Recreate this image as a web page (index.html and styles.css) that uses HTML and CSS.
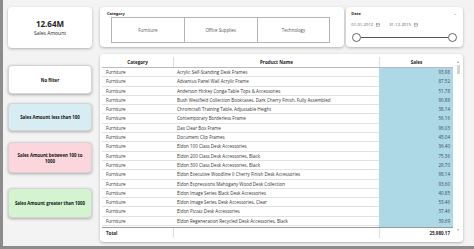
FILE: index.html
```html
<!DOCTYPE html>
<html lang="en">
<head>
    <meta charset="UTF-8">
    <title>Sales Dashboard</title>
    <link rel="stylesheet" href="styles.css">
</head>
<body>
    <div class="canvas">
        <div class="left-col">
            <div class="card kpi-card">
                <div class="kpi-value">12.64M</div>
                <div class="kpi-label">Sales Amount</div>
            </div>
            <div class="filter-button btn-none">No filter</div>
            <div class="filter-button btn-low">Sales Amount less than 100</div>
            <div class="filter-button btn-mid">Sales Amount between 100 to 1000</div>
            <div class="filter-button btn-high">Sales Amount greater than 1000</div>
        </div>

        <div class="main-col">
            <div class="top-row">
                <div class="card slicer-card">
                    <div class="slicer-title">Category</div>
                    <div class="tiles">
                        <div class="tile">Furniture</div>
                        <div class="tile">Office Supplies</div>
                        <div class="tile">Technology</div>
                    </div>
                </div>
                <div class="card date-card">
                    <div class="date-head">
                        <span class="slicer-title">Date</span>
                        <span class="chevron">&#8964;</span>
                    </div>
                    <div class="date-inputs">
                        <span class="date-field">01-01-2012 <svg class="cal" viewBox="0 0 8 8"><rect x="0.5" y="1.5" width="7" height="6" fill="none" stroke="#777" stroke-width="0.9"/><line x1="0.5" y1="3.3" x2="7.5" y2="3.3" stroke="#777" stroke-width="0.9"/></svg></span>
                        <span class="date-field">31-12-2015 <svg class="cal" viewBox="0 0 8 8"><rect x="0.5" y="1.5" width="7" height="6" fill="none" stroke="#777" stroke-width="0.9"/><line x1="0.5" y1="3.3" x2="7.5" y2="3.3" stroke="#777" stroke-width="0.9"/></svg></span>
                    </div>
                    <div class="slider">
                        <span class="handle"></span>
                        <span class="track"></span>
                        <span class="handle"></span>
                    </div>
                </div>
            </div>

            <div class="card table-card">
                <div class="table-wrap">
                    <div class="grid-row head-row">
                        <div class="cell head">Category</div>
                        <div class="cell head">Product Name</div>
                        <div class="cell head">Sales</div>
                    </div>
                    <div class="rows" id="rows"></div>
                    <div class="grid-row total-row">
                        <div class="cell">Total</div>
                        <div class="cell"></div>
                        <div class="cell num">25,980.17</div>
                    </div>
                </div>
                <div class="scrollbar">
                    <span class="arrow">&#9652;</span>
                    <span class="thumb"></span>
                    <span class="arrow down">&#9662;</span>
                </div>
            </div>
        </div>
    </div>

    <script>
        const data = [
            ['Acrylic Self-Standing Desk Frames', '93.98'],
            ['Advantus Panel Wall Acrylic Frame', '87.52'],
            ['Anderson Hickey Conga Table Tops & Accessories', '51.78'],
            ['Bush Westfield Collection Bookcases, Dark Cherry Finish, Fully Assembled', '90.88'],
            ['Chromcraft Training Table, Adjustable Height', '38.14'],
            ['Contemporary Borderless Frame', '56.16'],
            ['Dax Clear Box Frame', '96.03'],
            ['Document Clip Frames', '45.04'],
            ['Eldon 100 Class Desk Accessories', '36.40'],
            ['Eldon 200 Class Desk Accessories, Black', '75.36'],
            ['Eldon 300 Class Desk Accessories, Black', '29.70'],
            ['Eldon Executive Woodline II Cherry Finish Desk Accessories', '98.14'],
            ['Eldon Expressions Mahogany Wood Desk Collection', '93.60'],
            ['Eldon Image Series Black Desk Accessories', '40.85'],
            ['Eldon Image Series Desk Accessories, Clear', '53.46'],
            ['Eldon Pizzaz Desk Accessories', '37.46'],
            ['Eldon Regeneration Recycled Desk Accessories, Black', '39.69'],
            ['Eldon Regeneration Recycled Desk Accessories, Smoke', '11.76']
        ];

        const rows = document.getElementById('rows');
        data.forEach(([name, sales]) => {
            const row = document.createElement('div');
            row.className = 'grid-row body-row';
            row.innerHTML = '<div class="cell">Furniture</div>' +
                '<div class="cell"></div>' +
                '<div class="cell num sales"></div>';
            row.children[1].textContent = name;
            row.children[2].textContent = sales;
            rows.appendChild(row);
        });
    </script>
</body>
</html>
```

FILE: styles.css
```css
* {
    margin: 0;
    padding: 0;
    box-sizing: border-box;
}

body {
    font-family: "Open Sans", "Noto Sans", sans-serif;
    background-color: #8c8c8c;
    width: 474px;
    height: 249px;
    overflow: hidden;
    color: #252423;
}

.canvas {
    margin-left: 3px;
    width: 471px;
    height: 246px;
    background-color: #f3f3f3;
    display: grid;
    grid-template-columns: 84px 363px;
    column-gap: 8px;
    padding: 7px 0 0 5px;
}

.card {
    background-color: white;
    border-radius: 4px;
    box-shadow: 0 1px 3px rgba(0, 0, 0, 0.28);
}

/* left column */
.left-col {
    display: flex;
    flex-direction: column;
}

.kpi-card {
    height: 41px;
    display: flex;
    flex-direction: column;
    align-items: center;
    justify-content: center;
    gap: 2px;
}

.kpi-value {
    font-size: 8px;
    font-weight: 700;
    line-height: 9px;
}

.kpi-label {
    font-size: 5px;
    line-height: 6px;
}

.filter-button {
    border-radius: 4px;
    box-shadow: 0 1px 3px rgba(0, 0, 0, 0.3);
    border: 1px solid #d4d4d4;
    display: flex;
    align-items: center;
    justify-content: center;
    text-align: center;
    font-size: 4.4px;
    font-weight: 700;
    line-height: 6px;
    padding: 0 3px;
    color: #111;
}

.btn-none {
    background-color: white;
    height: 29px;
    margin-top: 17px;
}

.btn-low {
    background-color: #d8ecf3;
    height: 28px;
    margin-top: 9px;
}

.btn-mid {
    background-color: #fbd6dd;
    height: 31px;
    margin-top: 11px;
    padding: 0 8px;
}

.btn-high {
    background-color: #d3f3d1;
    height: 30px;
    margin-top: 15px;
}

/* main column */
.main-col {
    display: flex;
    flex-direction: column;
}

.top-row {
    display: flex;
    gap: 2px;
    height: 40px;
}

.slicer-title {
    font-size: 4px;
    font-weight: 700;
    line-height: 5px;
}

.slicer-card {
    width: 245px;
    padding: 4px 14px 4px 7px;
}

.tiles {
    display: flex;
    margin: 1px 0 0 4px;
    height: 26px;
    border: 1px solid #b4b4b4;
}

.tile {
    flex: 1;
    display: flex;
    align-items: center;
    justify-content: center;
    font-size: 4.4px;
    color: #555;
}

.tile + .tile {
    border-left: 1px solid #b4b4b4;
}

.date-card {
    width: 117px;
    padding: 4px 6px 0 5px;
}

.date-head {
    display: flex;
    justify-content: space-between;
    align-items: center;
    height: 5px;
}

.chevron {
    font-size: 5px;
    color: #999;
    line-height: 5px;
}

.date-inputs {
    display: flex;
    gap: 9px;
    margin-top: 6px;
    font-size: 4.2px;
    color: #555;
    line-height: 6px;
}

.date-field {
    display: flex;
    align-items: center;
    gap: 3px;
}

.cal {
    width: 4px;
    height: 4px;
}

.slider {
    display: flex;
    align-items: center;
    margin-top: 5px;
    padding-left: 1px;
}

.handle {
    width: 9px;
    height: 9px;
    border-radius: 50%;
    border: 1px solid #666;
    background-color: white;
    flex-shrink: 0;
}

.track {
    flex: 1;
    height: 1.5px;
    background-color: #555;
}

/* table */
.table-card {
    margin-top: 7px;
    height: 188px;
    display: flex;
    padding: 3px 2px 4px 2px;
}

.table-wrap {
    width: 351px;
    display: flex;
    flex-direction: column;
}

.grid-row {
    display: grid;
    grid-template-columns: 71px 206px 74px;
}

.cell {
    font-size: 4.5px;
    line-height: 9.3px;
    padding: 0 4px;
    white-space: nowrap;
    overflow: hidden;
}

.num {
    text-align: right;
    padding-right: 3px;
}

.head-row {
    border-bottom: 1px solid #bbb;
}

.head {
    font-weight: 700;
    text-align: center;
    font-size: 4.6px;
    line-height: 10px;
}

.head + .head {
    border-left: 1px solid #ddd;
}

.rows {
    flex: 1;
    overflow: hidden;
}

.body-row .cell {
    border-bottom: 1px solid #e2e2e2;
    height: 9.3px;
    line-height: 8.6px;
    color: #333;
}

.body-row .sales {
    background-color: #add8e6;
    border-bottom-color: #add8e6;
    color: #3a4a55;
}

.total-row {
    border-top: 1px solid #999;
    height: 11px;
}

.total-row .cell {
    font-weight: 700;
    line-height: 10px;
}

.total-row .cell + .cell {
    border-left: 1px solid #ddd;
}

.total-row .num {
    border-left: none;
}

.scrollbar {
    width: 8px;
    margin-left: 2px;
    display: flex;
    flex-direction: column;
    align-items: center;
    padding-top: 2px;
}

.arrow {
    font-size: 4px;
    color: #aaa;
    line-height: 5px;
}

.thumb {
    width: 3px;
    height: 9px;
    background-color: #d6d6d6;
    margin-top: 1px;
}

.down {
    margin-top: auto;
    margin-bottom: 6px;
}
```
